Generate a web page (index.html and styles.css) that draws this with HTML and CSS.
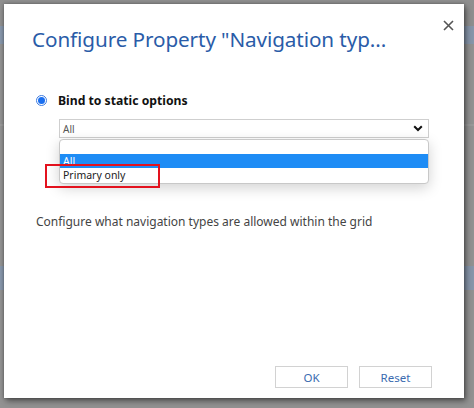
FILE: index.html
```html
<!DOCTYPE html>
<html>
<head>
<meta charset="utf-8">
<link rel="stylesheet" href="styles.css">
</head>
<body>
<div class="dialog">
  <button class="close" aria-label="Close">
    <svg width="11" height="11" viewBox="0 0 11 11"><path d="M1 1L10 10M10 1L1 10" stroke="#555" stroke-width="1.6"/></svg>
  </button>
  <h1 class="title">Configure Property "Navigation typ...</h1>
  <div class="option">
    <span class="radio"><span class="dot"></span></span>
    <span class="option-label">Bind to static options</span>
  </div>
  <div class="select-wrap">
    <div class="select">
      <span class="select-value">All</span>
      <svg class="chev" width="10" height="7" viewBox="0 0 10 7"><path d="M1.2 1.2L5 5L8.8 1.2" fill="none" stroke="#111" stroke-width="2"/></svg>
    </div>
    <ul class="listbox">
      <li class="item empty"></li>
      <li class="item selected">All</li>
      <li class="item">Primary only</li>
    </ul>
    <div class="highlight"></div>
  </div>
  <p class="desc">Configure what navigation types are allowed within the grid</p>
  <div class="spacer"></div>
  <div class="actions">
    <button class="btn">OK</button>
    <button class="btn">Reset</button>
  </div>
</div>
</body>
</html>
```
FILE: styles.css
```css
html, body {
  margin: 0;
  padding: 0;
}
body {
  width: 474px;
  height: 408px;
  overflow: hidden;
  background:
    linear-gradient(to bottom,
      #8f8f8f 0, #8f8f8f 26px,
      #8796aa 26px, #8796aa 44px,
      #929292 44px, #929292 124px,
      #9a9a9a 124px, #9a9a9a 126px,
      #929292 126px, #929292 266px,
      #8796aa 266px, #8796aa 290px,
      #929292 290px);
  font-family: "Noto Sans", "Open Sans", sans-serif;
  padding-top: 4px;
  padding-left: 4px;
  box-sizing: border-box;
}
.dialog {
  position: relative;
  width: 460px;
  height: 394px;
  background: #fff;
  box-shadow: 2px 3px 6px rgba(0,0,0,0.45), 0 0 3px rgba(0,0,0,0.3);
  display: flex;
  flex-direction: column;
  box-sizing: border-box;
  padding: 0 0 10px 0;
}
.close {
  position: absolute;
  right: 9px;
  top: 16px;
  width: 12px;
  height: 12px;
  padding: 0;
  border: 0;
  background: none;
  display: flex;
}
.title {
  margin: 20px 0 0 28px;
  font-size: 20.7px;
  line-height: 30px;
  font-weight: 400;
  color: #2a5ca8;
  letter-spacing: -0.1px;
}
.option {
  display: flex;
  align-items: center;
  margin: 39px 0 0 32px;
  height: 14px;
}
.radio {
  width: 11px;
  height: 11px;
  border-radius: 50%;
  border: 1px solid #3d7be0;
  box-sizing: border-box;
  display: flex;
  align-items: center;
  justify-content: center;
  background: #fff;
}
.dot {
  width: 7px;
  height: 7px;
  border-radius: 50%;
  background: #1a6ff0;
}
.option-label {
  margin-left: 11px;
  font-size: 12.2px;
  font-weight: 700;
  color: #111;
}
.select-wrap {
  position: relative;
  margin: 12px 0 0 55px;
  width: 370px;
  height: 75px;
}
.select {
  height: 19px;
  border: 1px solid #cfcfcf;
  box-sizing: border-box;
  display: flex;
  align-items: center;
  justify-content: space-between;
  padding: 0 5px 0 3px;
  background: #fff;
}
.select-value {
  font-size: 10px;
  color: #555;
}
.listbox {
  position: absolute;
  left: 0;
  top: 20px;
  width: 370px;
  margin: 0;
  padding: 0;
  list-style: none;
  background: #fff;
  border: 1px solid #c8c8c8;
  border-radius: 4px;
  box-shadow: 0 4px 14px rgba(0,0,0,0.18);
  box-sizing: border-box;
  overflow: hidden;
}
.item {
  height: 14px;
  font-size: 10.5px;
  line-height: 14px;
  padding-left: 3px;
  color: #222;
}
.item:last-child {
  height: 15px;
}
.item.selected {
  background: #1e8cf5;
  color: #fff;
}
.highlight {
  position: absolute;
  left: -14px;
  top: 45px;
  width: 115px;
  height: 24px;
  border: 2px solid #e3121e;
  box-sizing: border-box;
}
.desc {
  margin: 19px 0 0 32px;
  font-size: 12px;
  color: #444;
}
.spacer {
  flex: 1;
}
.actions {
  display: flex;
  justify-content: flex-end;
  gap: 11px;
  padding-right: 32px;
}
.btn {
  width: 73px;
  height: 22px;
  border: 1px solid #d2d2d2;
  background: #fff;
  font-family: "Noto Sans", "Open Sans", sans-serif;
  font-size: 11.5px;
  color: #3a6bb0;
  padding: 0;
}
```
